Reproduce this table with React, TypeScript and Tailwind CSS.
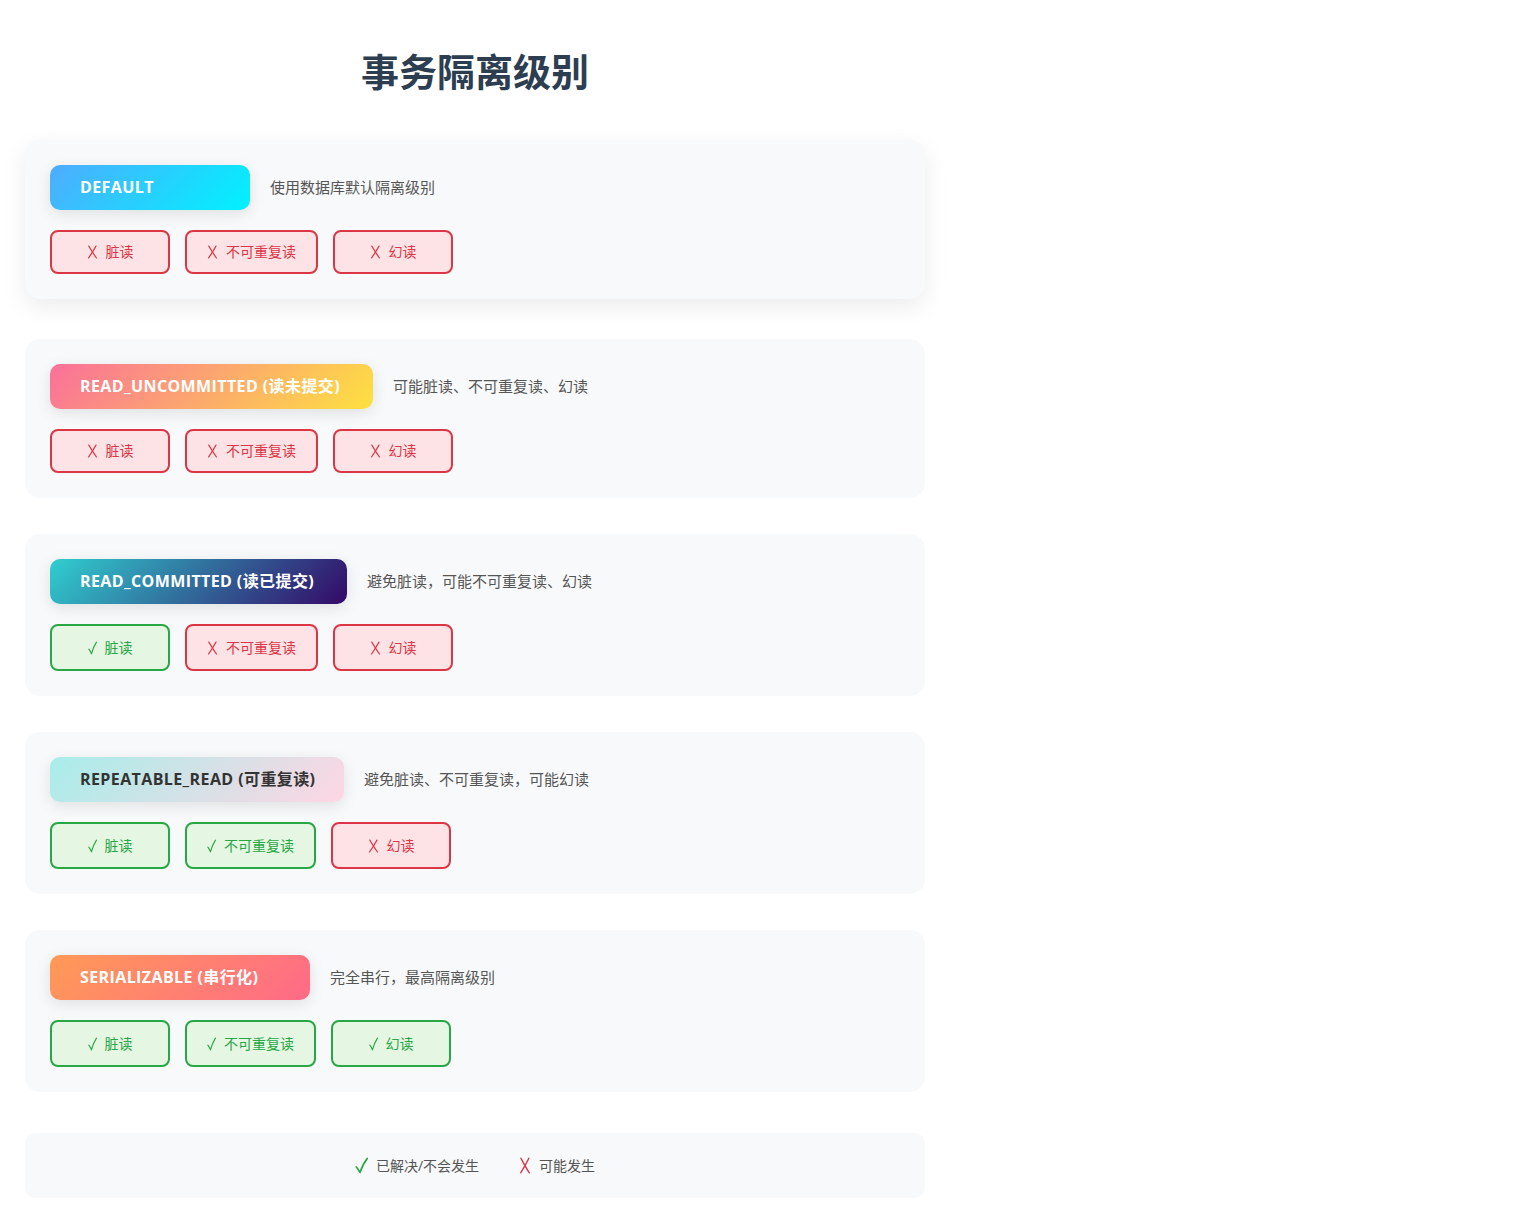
import React from "react";

type Chip = { ok: boolean; label: string };
type Level = {
  name: string;
  desc: string;
  badge: string;
  chips: Chip[];
  active?: boolean;
};

const levels: Level[] = [
  {
    name: "DEFAULT",
    desc: "使用数据库默认隔离级别",
    badge:
      "w-[200px] bg-[linear-gradient(135deg,#4facfe_0%,#00f2fe_100%)] text-white",
    chips: [
      { ok: false, label: "脏读" },
      { ok: false, label: "不可重复读" },
      { ok: false, label: "幻读" },
    ],
    active: true,
  },
  {
    name: "READ_UNCOMMITTED (读未提交)",
    desc: "可能脏读、不可重复读、幻读",
    badge:
      "w-[323px] bg-[linear-gradient(135deg,#fa709a_0%,#fee140_100%)] text-white",
    chips: [
      { ok: false, label: "脏读" },
      { ok: false, label: "不可重复读" },
      { ok: false, label: "幻读" },
    ],
  },
  {
    name: "READ_COMMITTED (读已提交)",
    desc: "避免脏读，可能不可重复读、幻读",
    badge:
      "w-[297px] bg-[linear-gradient(135deg,#30cfd0_0%,#330867_100%)] text-white",
    chips: [
      { ok: true, label: "脏读" },
      { ok: false, label: "不可重复读" },
      { ok: false, label: "幻读" },
    ],
  },
  {
    name: "REPEATABLE_READ (可重复读)",
    desc: "避免脏读、不可重复读，可能幻读",
    badge:
      "w-[294px] bg-[linear-gradient(135deg,#a8edea_0%,#fed6e3_100%)] text-[#333333]",
    chips: [
      { ok: true, label: "脏读" },
      { ok: true, label: "不可重复读" },
      { ok: false, label: "幻读" },
    ],
  },
  {
    name: "SERIALIZABLE (串行化)",
    desc: "完全串行，最高隔离级别",
    badge:
      "w-[260px] bg-[linear-gradient(135deg,#ff9a56_0%,#ff6a88_100%)] text-white",
    chips: [
      { ok: true, label: "脏读" },
      { ok: true, label: "不可重复读" },
      { ok: true, label: "幻读" },
    ],
  },
];

const font = {
  fontFamily: '"Open Sans", "Noto Sans CJK SC", "DejaVu Sans", sans-serif',
};

function CrossIcon({ className = "" }: { className?: string }) {
  return (
    <svg viewBox="0 0 10 14" className={className} fill="none" preserveAspectRatio="none">
      <path
        d="M1.6 1 C3.5 4.5 5.5 8.5 8.6 13"
        stroke="currentColor"
        strokeWidth="1.15"
        strokeLinecap="round"
      />
      <path
        d="M8.2 1 C6.5 4.5 4.3 8.5 1.4 13"
        stroke="currentColor"
        strokeWidth="1.15"
        strokeLinecap="round"
      />
    </svg>
  );
}

function CheckIcon({ className = "" }: { className?: string }) {
  return (
    <svg viewBox="0 0 10 14" className={className} fill="none" preserveAspectRatio="none">
      <path
        d="M1 8.2 C2 9.4 3 11 3.8 12.8 C5.2 8.5 7 4.5 9.4 1.2"
        stroke="currentColor"
        strokeWidth="1.3"
        strokeLinecap="round"
        strokeLinejoin="round"
      />
    </svg>
  );
}

function ChipView({ chip, tall }: { chip: Chip; tall: boolean }) {
  return (
    <div
      className={
        "min-w-[120px] px-5 rounded-lg border-2 text-sm flex items-center justify-center gap-2 " +
        (tall ? "h-[47px] " : "h-11 ") +
        (chip.ok
          ? "border-[#28a745] bg-[#e5f6e3] text-[#28a745]"
          : "border-[#dc3545] bg-[#fde3e5] text-[#dc3545]")
      }
    >
      {chip.ok ? (
        <CheckIcon className="w-[9px] h-[14px]" />
      ) : (
        <CrossIcon className="w-[11px] h-[14px]" />
      )}
      <span>{chip.label}</span>
    </div>
  );
}

export default function App() {
  return (
    <div className="bg-white min-h-[1227px] text-[#333]" style={font}>
      <div className="ml-[25px] w-[900px]">
        <h1 className="text-[38px] font-bold text-[#2c3e50] text-center leading-[60px] pt-[41px] mb-[43px]">
          事务隔离级别
        </h1>
        <div className="flex flex-col gap-[36px]">
          {levels.map((lv) => {
            const tall = lv.chips.some((c) => c.ok);
            return (
              <div
                key={lv.name}
                className={
                  "bg-[#f8f9fa] rounded-[15px] p-[25px] flex flex-col gap-5 " +
                  (lv.active
                    ? "-translate-y-1 shadow-[0_8px_25px_rgba(0,0,0,0.08)]"
                    : "")
                }
              >
                <div className="flex items-center">
                  <div
                    className={
                      "px-[30px] py-3 rounded-[10px] text-base font-bold leading-[21px] tracking-[0.4px] whitespace-nowrap shadow-[0_4px_15px_rgba(0,0,0,0.1)] " +
                      lv.badge
                    }
                  >
                    {lv.name}
                  </div>
                  <div className="ml-5 text-[15px] text-[#555]">{lv.desc}</div>
                </div>
                <div className="flex gap-[15px]">
                  {lv.chips.map((c, i) => (
                    <ChipView key={i} chip={c} tall={tall} />
                  ))}
                </div>
              </div>
            );
          })}
        </div>
        <div className="mt-[41px] bg-[#f8f9fa] rounded-[10px] h-[65px] flex items-center justify-center gap-10 text-sm text-[#555]">
          <div className="flex items-center gap-2">
            <CheckIcon className="w-[13px] h-[17px] text-[#28a745]" />
            <span>已解决/不会发生</span>
          </div>
          <div className="flex items-center gap-2">
            <CrossIcon className="w-[12px] h-[17px] text-[#dc3545]" />
            <span>可能发生</span>
          </div>
        </div>
      </div>
    </div>
  );
}
